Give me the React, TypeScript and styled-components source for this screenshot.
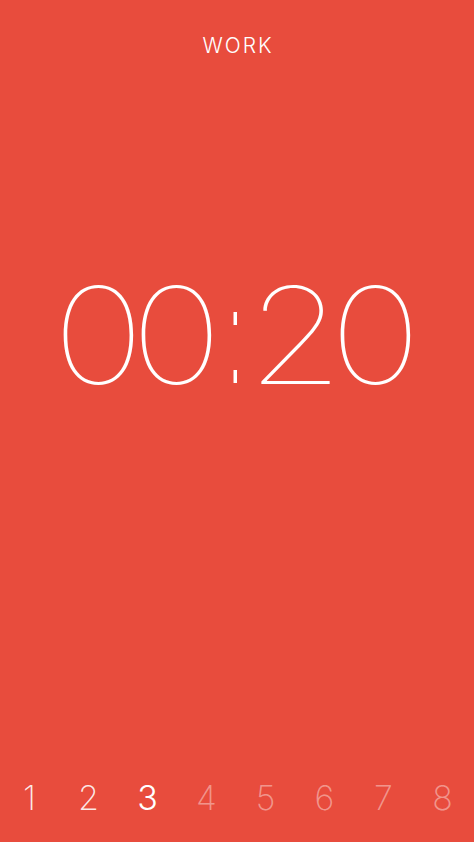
import styled, { createGlobalStyle } from 'styled-components'

const GlobalStyle = createGlobalStyle`
  html, body {
    margin: 0;
    padding: 0;
    background: #e84c3d;
  }
  * {
    box-sizing: border-box;
  }
`

const Screen = styled.div`
  display: flex;
  flex-direction: column;
  width: 100%;
  height: 100vh;
  background: #e84c3d;
  color: #fff;
  font-family: Inter, "Helvetica Neue", "Liberation Sans", sans-serif;
  overflow: hidden;
`

const Phase = styled.h1`
  margin: 0;
  padding: 34px 0 0 2px;
  font-size: 21px;
  font-weight: 300;
  line-height: 24px;
  letter-spacing: 2px;
  text-align: center;
`

const Clock = styled.div`
  display: flex;
  flex: 1;
  justify-content: center;
  align-items: center;
  padding-bottom: 166px;
`

// wide, hairline digits; the colon is drawn as two short bars
const Digits = styled.span`
  display: inline-block;
  padding-right: 12px;
  font-size: 134px;
  font-weight: 100;
  line-height: 1;
  letter-spacing: -12px;
  transform: scaleX(1.16);
`

const Colon = styled.span`
  position: relative;
  margin: 0 3px 0 6px;
  color: transparent;

  &::before,
  &::after {
    content: '';
    position: absolute;
    left: 50%;
    width: 2.6px;
    height: 13px;
    margin-left: 4px;
    background: #fff;
  }
  &::before {
    bottom: 91px;
  }
  &::after {
    bottom: 33px;
  }
`

const Rounds = styled.ol`
  display: grid;
  grid-template-columns: repeat(8, 1fr);
  margin: 0;
  padding: 0 2px 24px 0;
  list-style: none;
`

const Round = styled.li<{ $state: 'done' | 'current' | 'todo' }>`
  text-align: center;
  font-size: 34px;
  line-height: 40px;
  font-weight: ${(p) => (p.$state === 'current' ? 300 : 200)};
  color: ${(p) =>
    p.$state === 'current'
      ? '#fff'
      : p.$state === 'done'
        ? 'rgba(255,255,255,0.88)'
        : 'rgba(255,255,255,0.42)'};
`

const current = 3

const App = () => {
  return (
    <>
      <GlobalStyle />
      <Screen>
        <Phase>WORK</Phase>
        <Clock>
          <Digits>
            00<Colon>:</Colon>20
          </Digits>
        </Clock>
        <Rounds>
          {[1, 2, 3, 4, 5, 6, 7, 8].map((n) => (
            <Round key={n} $state={n < current ? 'done' : n === current ? 'current' : 'todo'}>
              {n}
            </Round>
          ))}
        </Rounds>
      </Screen>
    </>
  )
}

export default App
